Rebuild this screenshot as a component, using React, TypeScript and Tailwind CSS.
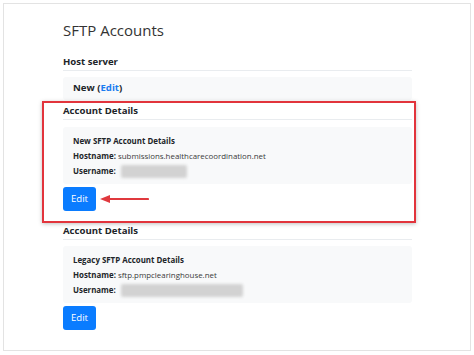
const FONT = "font-['Open_Sans','Noto_Sans',sans-serif]";

function SectionHeading({ children }: { children: string }) {
  return (
    <div className="border-b border-[#e9ecef] text-[9.6px] font-bold leading-[16px] text-[#212529]">
      {children}
    </div>
  );
}

function Blurred({ width }: { width: string }) {
  return <span className={`ml-[5px] inline-block h-[13px] ${width} rounded-[2px] bg-[#d2d2d2] blur-[1.5px]`} />;
}

function DetailsBox({ title, host, userWidth }: { title: string; host: string; userWidth: string }) {
  return (
    <div className="rounded-[3px] bg-[#f8f9fa] px-[10px] pt-[7px] pb-[5px] text-[7.9px] leading-[15px] text-[#212529]">
      <div className="font-bold">{title}</div>
      <div>
        <span className="font-bold">Hostname:</span> <span className="text-[#3a3a3a]">{host}</span>
      </div>
      <div className="flex items-center">
        <span className="font-bold">Username:</span>
        <Blurred width={userWidth} />
      </div>
    </div>
  );
}

function EditButton() {
  return (
    <button className="flex h-[24px] w-[33px] items-center justify-center rounded-[3px] bg-[#0a7cff] text-[9.6px] text-white">
      Edit
    </button>
  );
}

function Arrow() {
  return (
    <svg width="50" height="10" viewBox="0 0 50 10" className="ml-[3px]">
      <path d="M9 5 H49" stroke="#e0393e" strokeWidth="2.2" strokeLinecap="round" />
      <path d="M1 5 L11 1 L11 9 Z" fill="#e0393e" />
    </svg>
  );
}

export default function App() {
  return (
    <div className={`min-h-[355px] w-[474px] bg-white pt-[3px] pl-[3px] ${FONT}`}>
      <div className="h-[348px] w-[468px] border border-[#e3e3e3] pl-[59px] pt-[15px]">
        <div className="w-[349px]">
          <h1 className="text-[15px] leading-[22px] text-[#333]">SFTP Accounts</h1>

          <div className="mt-[13px]">
            <SectionHeading>Host server</SectionHeading>
          </div>
          <div className="mt-[6px] flex h-[23px] items-center rounded-[3px] bg-[#f8f9fa] px-[10px] text-[9.6px] font-bold text-[#212529]">
            New (<span className="text-[#1a7cf0]">Edit</span>)
          </div>

          {/* highlighted section */}
          <div className="-ml-[21px] -mr-[4px] mt-[1px] border-2 border-[#e2343c] pl-[19px] pr-[2px] pb-[10px] shadow-[0_1px_4px_rgba(0,0,0,0.25)]">
            <SectionHeading>Account Details</SectionHeading>
            <div className="mt-[7px]">
              <DetailsBox
                title="New SFTP Account Details"
                host="submissions.healthcarecoordination.net"
                userWidth="w-[66px]"
              />
            </div>
            <div className="mt-[3px] flex items-center">
              <EditButton />
              <Arrow />
            </div>
          </div>

          <div className="leading-[14px]">
            <SectionHeading>Account Details</SectionHeading>
          </div>
          <div className="mt-[6px]">
            <DetailsBox
              title="Legacy SFTP Account Details"
              host="sftp.pmpclearinghouse.net"
              userWidth="w-[122px]"
            />
          </div>
          <div className="mt-[3px]">
            <EditButton />
          </div>
        </div>
      </div>
    </div>
  );
}
